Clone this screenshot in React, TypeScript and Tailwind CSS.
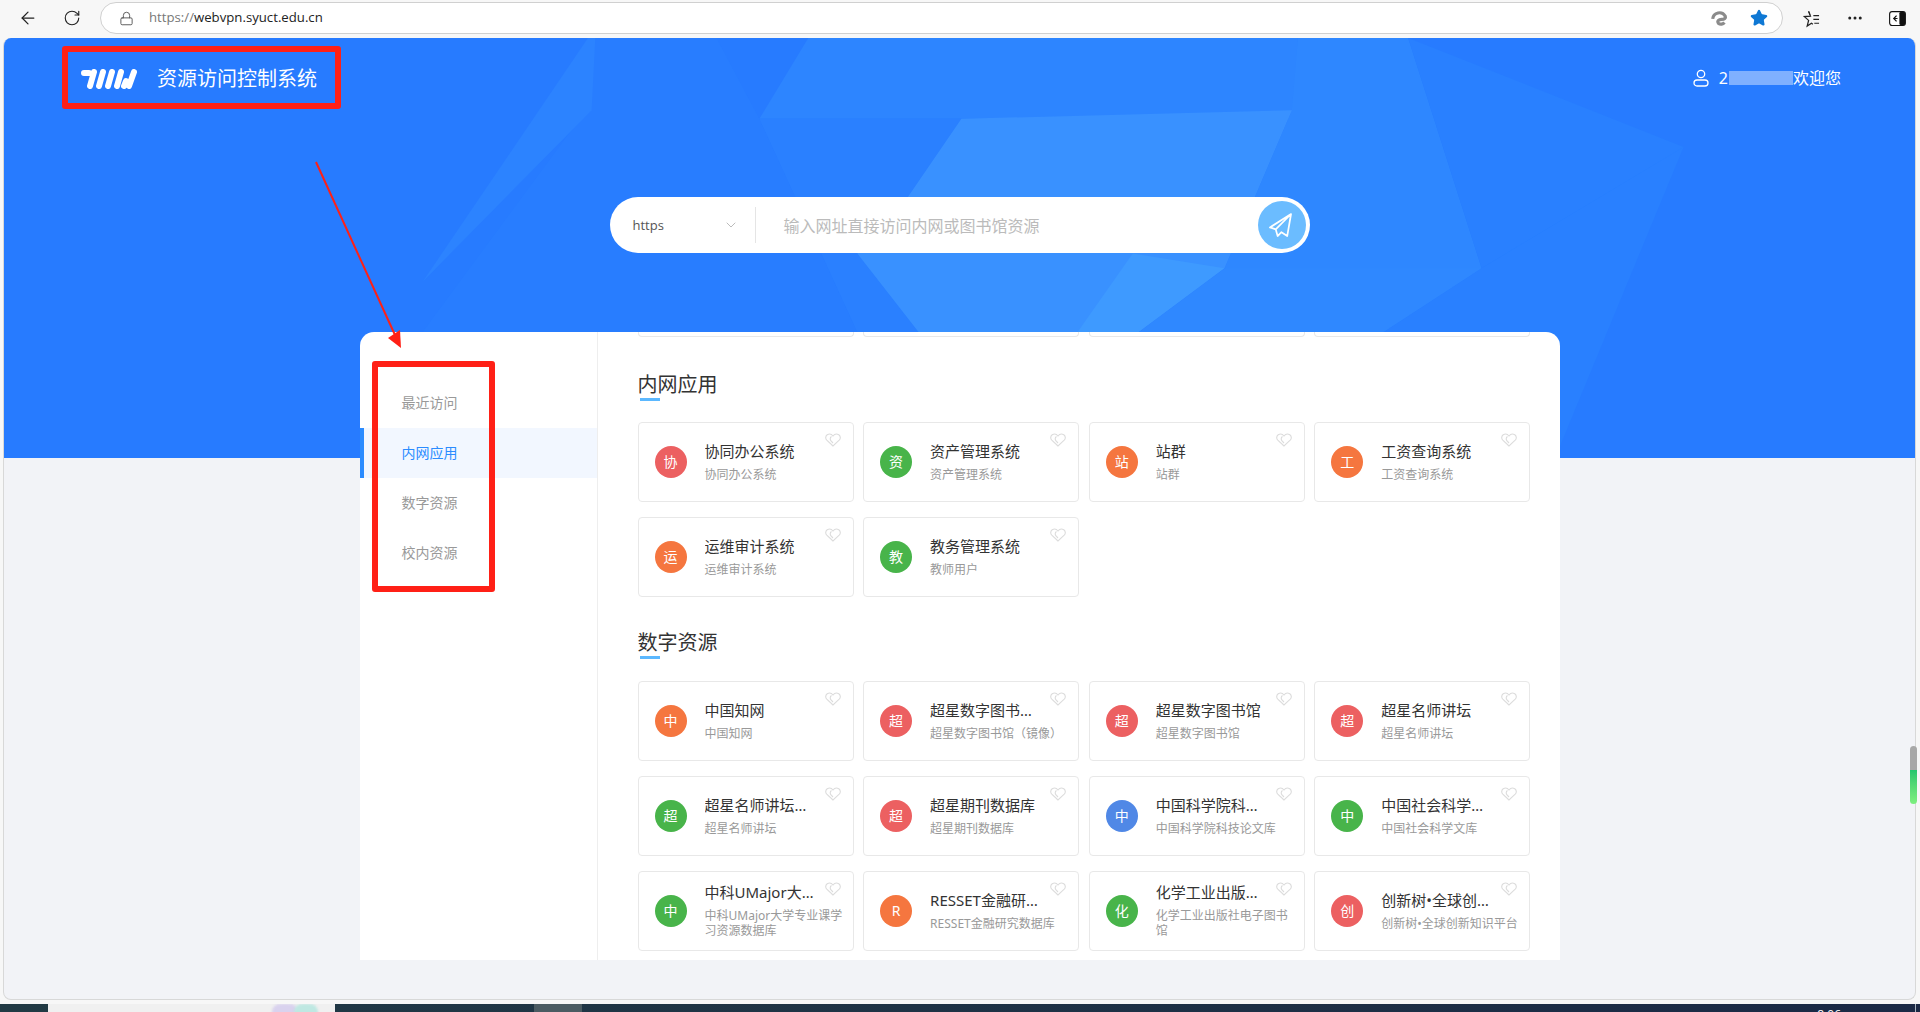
import React from 'react';
import { ArrowLeft, ChevronDown, Lock, MoreHorizontal, RotateCw, Star } from 'lucide-react';

type Item = { title: string; sub: string; mark: string; color: string };

const RED = 'bg-[#ec6061]';
const GREEN = 'bg-[#48b44a]';
const ORANGE = 'bg-[#f5763f]';
const BLUE = 'bg-[#5088e6]';

const intranet: Item[] = [
  { title: '协同办公系统', sub: '协同办公系统', mark: '协', color: RED },
  { title: '资产管理系统', sub: '资产管理系统', mark: '资', color: GREEN },
  { title: '站群', sub: '站群', mark: '站', color: ORANGE },
  { title: '工资查询系统', sub: '工资查询系统', mark: '工', color: ORANGE },
  { title: '运维审计系统', sub: '运维审计系统', mark: '运', color: ORANGE },
  { title: '教务管理系统', sub: '教师用户', mark: '教', color: GREEN },
];

const digital: Item[] = [
  { title: '中国知网', sub: '中国知网', mark: '中', color: ORANGE },
  { title: '超星数字图书馆（镜像）', sub: '超星数字图书馆（镜像）', mark: '超', color: RED },
  { title: '超星数字图书馆', sub: '超星数字图书馆', mark: '超', color: RED },
  { title: '超星名师讲坛', sub: '超星名师讲坛', mark: '超', color: RED },
  { title: '超星名师讲坛（镜像）', sub: '超星名师讲坛', mark: '超', color: GREEN },
  { title: '超星期刊数据库', sub: '超星期刊数据库', mark: '超', color: RED },
  { title: '中国科学院科技论文库', sub: '中国科学院科技论文库', mark: '中', color: BLUE },
  { title: '中国社会科学文库', sub: '中国社会科学文库', mark: '中', color: GREEN },
  { title: '中科UMajor大学专业课学习资源数据库', sub: '中科UMajor大学专业课学习资源数据库', mark: '中', color: GREEN },
  { title: 'RESSET金融研究数据库', sub: 'RESSET金融研究数据库', mark: 'R', color: ORANGE },
  { title: '化学工业出版社电子图书馆', sub: '化学工业出版社电子图书馆', mark: '化', color: GREEN },
  { title: '创新树•全球创新知识平台', sub: '创新树•全球创新知识平台', mark: '创', color: RED },
];

const Heart = () => (
  <svg viewBox="0 0 16 14" className="absolute top-[10px] right-[12px] h-[14px] w-[16px]" fill="none" stroke="#dcdcdc" strokeWidth="1.1">
    <path d="M8 13 1.8 7.2C.2 5.6.4 3 2.2 1.8 4 .7 6.5 1 8 3c1.500-2 4-2.300 5.800-1.200 1.800 1.200 2 3.800.4 5.400L8 13Z" />
    <path d="M6.500 3.500C5 4.500 4.800 6.500 6 8l2 2" />
  </svg>
);

const Card = ({ item }: { item: Item }) => (
  <div className="relative flex h-[80px] items-center rounded border border-[#e8e8e8] bg-white pl-[16px]">
    <div className={`flex h-8 w-8 shrink-0 items-center justify-center rounded-full text-sm text-white ${item.color}`}>
      {item.mark}
    </div>
    <div className="ml-[18px] w-[140px] pb-[2px]">
      <div className="w-[110px] truncate text-[15px] leading-[20px] text-[#333]">{item.title}</div>
      <div className="mt-[6px] text-xs leading-[15px] text-[#999]">{item.sub}</div>
    </div>
    <Heart />
  </div>
);

const SectionTitle = ({ text }: { text: string }) => (
  <div>
    <div className="h-[30px] text-[20px] leading-[32px] text-[#333]">{text}</div>
    <div className="-mt-px ml-[2px] h-[3px] w-[20px] bg-[#5bb8ff]" />
  </div>
);

const BrowserBar = () => (
  <div className="flex h-[38px] shrink-0 items-center bg-[#f7f7f7] pb-[2px] pl-[18px] text-[#222]">
    <ArrowLeft size={20} strokeWidth={1.5} />
    <RotateCw size={18} strokeWidth={1.5} className="ml-[25px]" />
    <div className="ml-[19px] flex h-[32px] w-[1683px] items-center rounded-full border border-[#d0d0d0] bg-white pl-[18px] pr-[14px]">
      <Lock size={15} strokeWidth={1.5} className="text-[#555]" />
      <span className="ml-[15px] font-['Open_Sans',sans-serif] text-[13.2px]">
        <span className="text-[#777]">https://</span>webvpn.syuct.edu.cn
      </span>
      <svg viewBox="0 0 20 20" className="ml-auto h-[18px] w-[18px]" fill="none" stroke="#8b8b8b" strokeWidth="3.500">
        <path d="M3 11a7.500 7.500 0 0 1 14-3c.800 2-1 3.500-4 3.500-3.500 0-5.500 2-3.500 4.500 2 1.500 5 1 6.500-1" />
      </svg>
      <Star size={18} className="ml-[22px] fill-[#0f78d4] text-[#0f78d4]" />
    </div>
    <svg viewBox="0 0 20 20" className="ml-[18px] h-[19px] w-[19px]" fill="none" stroke="#222" strokeWidth="1.300">
      <path d="M8 2.500 10 7.500l-6.500.5 4.500 4-1.500 6 4.500-3 1.500 1" />
      <path d="M8 2.500l1.500 3.500M13 7h6M13 11h6M14 15h5" />
    </svg>
    <MoreHorizontal size={18} strokeWidth={2} className="ml-[26px]" />
    <svg viewBox="0 0 18 16" className="ml-[25px] h-[15px] w-[17px]">
      <rect x="0.600" y="0.600" width="16.800" height="14.800" rx="2.500" fill="#fff" stroke="#111" strokeWidth="1.200" />
      <rect x="11" y="1" width="6" height="14" rx="1.500" fill="#111" />
      <path d="M8 5 5 8l3 3M5 8h4" stroke="#111" strokeWidth="1.300" fill="none" />
    </svg>
  </div>
);

const Taskbar = () => (
  <div className="mt-[4px] flex h-[8px] shrink-0 overflow-hidden bg-gradient-to-r from-[#213a44] to-[#1b2945]">
    <div className="w-[48px]" />
    <div className="flex w-[287px] justify-end bg-[#f0f0f0] pr-[17px]">
      <div className="h-[16px] w-[26px] rounded-full bg-[#d9d2ee] blur-[1px]" />
      <div className="-ml-[4px] h-[16px] w-[24px] rounded-full bg-[#bfe8e2] blur-[1px]" />
    </div>
    <div className="w-[199px]" />
    <div className="w-[48px] bg-[#4b5b62]" />
    <div className="ml-auto pr-[74px] pt-[4px] font-['Open_Sans',sans-serif] text-xs leading-[14px] text-white">8:06</div>
    <div className="mr-[4px] w-px bg-[#a9b4bf]" />
  </div>
);

const App = () => {
  return (
    <div className="relative flex h-[1012px] w-[1920px] flex-col overflow-hidden bg-[#f7f7f7] font-['Noto_Sans','Noto_Sans_CJK_SC',sans-serif]">
      <BrowserBar />

      <div className="mx-[4px] ml-[3px] flex-1 overflow-hidden rounded-[8px] border-x border-b border-[#d8d8d8] bg-[#f2f3f7]">
        {/* Hero */}
        <div className="relative h-[420px] bg-[#277bff]">
          <svg viewBox="3 31 1561 343" preserveAspectRatio="none" className="absolute inset-0 h-full w-full">
            <polygon points="480,31 585,31 620,97 700,271 345,271 480,88" fill="#287dff" />
            <polygon points="620,97 660,31 1060,31 1060,97" fill="#2d85ff" />
            <polygon points="620,97 785,97 735,170 700,207 750,271 700,271" fill="#2a80ff" />
            <polygon points="1060,31 1150,31 1210,219 1130,271 1000,219 1055,90" fill="#2e87ff" />
            <polygon points="785,97 1055,90 1000,219 930,271 750,271 700,207 735,170" fill="#3991ff" />
            <polygon points="1000,219 930,271 880,271 925,207" fill="#3e9aff" />
            <polygon points="1000,219 1210,219 1130,271 930,271" fill="#2f88ff" />
            <polygon points="480,31 486,31 483,90 345,230" fill="#2c83ff" />
            <polygon points="1150,31 1375,120 1210,219" fill="#2980ff" />
            <polygon points="1210,219 1375,120 1270,374 1130,271" fill="#2980ff" />
          </svg>

          <div className="relative flex h-[82px] items-center justify-between pl-[76px] pr-[74px] text-white">
            <div className="flex items-center">
              <svg viewBox="0 0 56 20" className="h-[20px] w-[58px]" fill="none" stroke="#fff" strokeWidth="6" strokeLinecap="round">
                <path d="M3 4h5M13 3 9 17M22 3l-4 14M31 3l-4 14M40 3l-4 14M45 12l-2 5M53 3l-5 14" />
              </svg>
              <span className="ml-[19px] text-[20px]">资源访问控制系统</span>
            </div>
            <div className="flex items-center pb-[2px] text-[16px]">
              <svg viewBox="0 0 16 18" className="h-[18px] w-[16px]" fill="none" stroke="#fff" strokeWidth="1.300">
                <circle cx="8" cy="5" r="3.700" />
                <rect x="1" y="11" width="14" height="6" rx="3" />
              </svg>
              <span className="ml-[10px]">2</span>
              <div className="ml-[1px] flex h-[14px] w-[64px] bg-[#7fb0ff]" />
              <span>欢迎您</span>
            </div>
          </div>

          {/* Search */}
          <div className="relative mx-auto mt-[77px] flex h-[56px] w-[700px] items-center rounded-full bg-white pl-[23px] pr-[4px]">
            <span className="w-[90px] pt-[1px] font-['Open_Sans',sans-serif] text-[13px] text-[#555]">https</span>
            <ChevronDown size={16} strokeWidth={1.2} className="text-[#aaa]" />
            <div className="ml-[16px] h-[36px] w-px bg-[#e5e5e5]" />
            <span className="ml-[28px] pt-[1px] text-[16px] text-[#bbb]">输入网址直接访问内网或图书馆资源</span>
            <div className="ml-auto flex h-[48px] w-[48px] items-center justify-center rounded-full bg-[#6bbcff] pr-[2px]">
              <svg viewBox="0 0 24 26" className="h-[25px] w-[23px]" fill="none" stroke="#fff" strokeWidth="1.800" strokeLinejoin="round">
                <path d="M23 1 1 15l6 2 2 7 4-4 6 4L23 1ZM23 1 7 17" />
              </svg>
            </div>
          </div>
        </div>

        {/* Main panel */}
        <div className="relative mx-auto -mt-[126px] flex h-[628px] w-[1200px] overflow-hidden rounded-t-[14px] bg-white">
          <div className="w-[238px] shrink-0 border-r border-[#eeeeee] pt-[46px] text-sm">
            <div className="flex h-[50px] items-center pl-[42px] text-[#999]">最近访问</div>
            <div className="flex h-[50px] items-center border-l-4 border-[#2b8cff] bg-[#f2f7ff] pl-[38px] text-[#2b8cff]">内网应用</div>
            <div className="flex h-[50px] items-center pl-[42px] text-[#999]">数字资源</div>
            <div className="flex h-[50px] items-center pl-[42px] text-[#999]">校内资源</div>
          </div>

          <div className="flex-1 pl-[40px] pr-[30px]">
            <div className="grid grid-cols-[repeat(4,216px)] gap-x-[9.6px]">
              {[0, 1, 2, 3].map((i) => (
                <div key={i} className="h-[5px] rounded-b border border-t-0 border-[#e8e8e8]" />
              ))}
            </div>

            <div className="mt-[32px]">
              <SectionTitle text="内网应用" />
            </div>
            <div className="mt-[21px] grid grid-cols-[repeat(4,216px)] gap-x-[9.6px] gap-y-[15px]">
              {intranet.map((item) => (
                <Card key={item.title} item={item} />
              ))}
            </div>

            <div className="mt-[30px]">
              <SectionTitle text="数字资源" />
            </div>
            <div className="mt-[22px] grid grid-cols-[repeat(4,216px)] gap-x-[9.6px] gap-y-[15px]">
              {digital.map((item) => (
                <Card key={item.title} item={item} />
              ))}
            </div>
          </div>
        </div>
      </div>

      <Taskbar />

      {/* Red annotations drawn over the screenshot */}
      <div className="absolute left-[62px] top-[46px] h-[63px] w-[279px] rounded-[3px] border-[6px] border-[#ff2016]" />
      <div className="absolute left-[372px] top-[361px] h-[231px] w-[123px] rounded-[3px] border-[6px] border-[#ff2016]" />
      <svg className="absolute left-[310px] top-[155px] h-[200px] w-[100px]" viewBox="0 0 100 200" fill="none">
        <path d="M6 7 85 180" stroke="#ff2016" strokeWidth="2" />
        <polygon points="91,193 78,183 90,175" fill="#ff2016" />
      </svg>

      {/* Scroll handle */}
      <div className="absolute left-[1910px] top-[746px] flex h-[58px] w-[7px] flex-col overflow-hidden rounded-full">
        <div className="h-[24px] bg-[#a8a8a8]" />
        <div className="flex-1 bg-gradient-to-b from-[#22c66d] to-[#7df07f]" />
      </div>
    </div>
  );
};

export default App;
